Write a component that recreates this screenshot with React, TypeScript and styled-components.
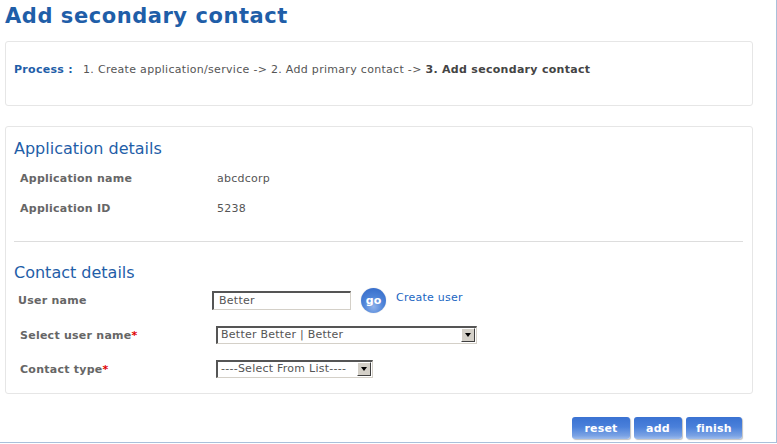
import React from "react";
import styled, { createGlobalStyle } from "styled-components";

const GlobalStyle = createGlobalStyle`
  html, body {
    margin: 0;
    padding: 0;
    background: #ffffff;
  }
  body {
    font-family: "DejaVu Sans", Verdana, sans-serif;
    font-size: 11px;
    color: #555555;
    letter-spacing: 0.25px;
  }
`;

// Layout
const Page = styled.div`
  box-sizing: border-box;
  width: 777px;
  height: 443px;
  border-right: 1px solid #a9c0da;
  border-bottom: 1px solid #a9c0da;
  padding: 3px 23px 0 5px;
  display: flex;
  flex-direction: column;
`;

const Title = styled.h1`
  margin: 0;
  font-size: 21px;
  line-height: 26px;
  font-weight: bold;
  color: #1f5ea8;
  letter-spacing: 0.55px;
`;

const Box = styled.section<{ $gap: number }>`
  box-sizing: border-box;
  margin-top: ${(p) => p.$gap}px;
  border: 1px solid #e6e6e6;
  border-radius: 3px;
`;

const ProcessBox = styled(Box)`
  height: 65px;
  padding: 21px 0 0 8px;
  font-size: 11px;
  line-height: 14px;
  letter-spacing: 0.3px;
`;

const ProcessLabel = styled.span`
  color: #1f5ea8;
  font-weight: bold;
  margin-right: 10px;
`;

const Steps = styled.span`
  color: #555555;
  b {
    color: #444444;
  }
`;

const DetailsBox = styled(Box)`
  height: 268px;
  padding: 12px 8px 0 8px;
`;

const Heading = styled.h2`
  margin: 0;
  font-size: 16px;
  line-height: 20px;
  font-weight: normal;
  color: #1f5ea8;
  letter-spacing: 0;
`;

const InfoTable = styled.div`
  display: grid;
  grid-template-columns: 197px 1fr;
  grid-auto-rows: 30px;
  padding: 4px 0 0 6px;
  align-items: center;
`;

const Label = styled.div`
  font-weight: bold;
  color: #666666;
  font-size: 11px;
`;

const Value = styled.div`
  color: #555555;
  font-size: 11px;
`;

const Divider = styled.hr`
  margin: 18px 1px 21px 0;
  border: none;
  border-top: 1px solid #dddddd;
`;

const FormRow = styled.div<{ $indent: number; $labelWidth: number; $height: number }>`
  display: flex;
  align-items: center;
  height: ${(p) => p.$height}px;
  padding-left: ${(p) => p.$indent}px;
  & > ${Label} {
    width: ${(p) => p.$labelWidth}px;
    flex: none;
  }
`;

const Required = styled.span`
  color: #e00000;
`;

const TextInput = styled.div`
  box-sizing: border-box;
  width: 139px;
  height: 19px;
  border-style: solid;
  border-width: 2px 1px 1px 2px;
  border-color: #555555 #d4d0c8 #d4d0c8 #555555;
  padding-left: 5px;
  line-height: 15px;
  color: #555555;
  font-size: 11px;
`;

const GoButton = styled.span`
  width: 25px;
  height: 25px;
  margin-left: 10px;
  border-radius: 50%;
  background: radial-gradient(circle at 50% 75%, #8fb2ea 0%, #4d83d8 45%, #2f66c6 100%);
  color: #ffffff;
  font-weight: bold;
  font-size: 11px;
  letter-spacing: 0;
  display: flex;
  align-items: center;
  justify-content: center;
  box-shadow: 0 0 1px rgba(0, 0, 0, 0.3);
`;

const Link = styled.a`
  margin-left: 10px;
  margin-top: -6px;
  color: #1a66c2;
  font-size: 11px;
  text-decoration: none;
`;

const Select = styled.div<{ $width: number }>`
  box-sizing: border-box;
  width: ${(p) => p.$width}px;
  height: 18px;
  border-style: solid;
  border-width: 2px 1px 1px 2px;
  border-color: #555555 #d4d0c8 #d4d0c8 #555555;
  display: flex;
  align-items: stretch;
  color: #555555;
  font-size: 11px;
`;

const SelectText = styled.span`
  flex: 1;
  padding-left: 3px;
  line-height: 14px;
  white-space: nowrap;
  overflow: hidden;
`;

const SelectArrow = styled.span`
  box-sizing: border-box;
  width: 14px;
  margin: 0 1px 1px 0;
  background: #d4d0c8;
  border-style: solid;
  border-width: 1px;
  border-color: #ffffff #404040 #404040 #ffffff;
  display: flex;
  align-items: center;
  justify-content: center;
  &::after {
    content: "";
    border-left: 3px solid transparent;
    border-right: 3px solid transparent;
    border-top: 4px solid #000000;
  }
`;

const Actions = styled.div`
  display: flex;
  justify-content: flex-end;
  gap: 4px;
  margin-top: 23px;
  padding-right: 11px;
`;

const ActionButton = styled.button<{ $width: number }>`
  width: ${(p) => p.$width}px;
  height: 22px;
  border: none;
  border-radius: 3px;
  background: linear-gradient(#3a72d2 0%, #4a80da 45%, #7aa2e4 85%, #9ebcec 100%);
  box-shadow: 1px 1px 1px rgba(120, 120, 120, 0.45);
  color: #ffffff;
  font-family: "DejaVu Sans", Verdana, sans-serif;
  font-weight: bold;
  font-size: 11px;
  letter-spacing: 0.2px;
  padding: 0;
`;

export default function App() {
  return (
    <>
      <GlobalStyle />
      <Page>
        <Title>Add secondary contact</Title>
        <ProcessBox $gap={12}>
          <ProcessLabel>Process :</ProcessLabel>
          <Steps>
            1. Create application/service -&gt; 2. Add primary contact -&gt;{" "}
            <b>3. Add secondary contact</b>
          </Steps>
        </ProcessBox>
        <DetailsBox $gap={20}>
          <Heading>Application details</Heading>
          <InfoTable>
            <Label>Application name</Label>
            <Value>abcdcorp</Value>
            <Label>Application ID</Label>
            <Value>5238</Value>
          </InfoTable>
          <Divider />
          <Heading>Contact details</Heading>
          <FormRow $indent={4} $labelWidth={194} $height={35}>
            <Label>User name</Label>
            <TextInput>Better</TextInput>
            <GoButton>go</GoButton>
            <Link href="#">Create user</Link>
          </FormRow>
          <FormRow $indent={6} $labelWidth={196} $height={34}>
            <Label>
              Select user name<Required>*</Required>
            </Label>
            <Select $width={261}>
              <SelectText>Better Better | Better</SelectText>
              <SelectArrow />
            </Select>
          </FormRow>
          <FormRow $indent={6} $labelWidth={196} $height={34}>
            <Label>
              Contact type<Required>*</Required>
            </Label>
            <Select $width={157}>
              <SelectText>----Select From List----</SelectText>
              <SelectArrow />
            </Select>
          </FormRow>
        </DetailsBox>
        <Actions>
          <ActionButton $width={58}>reset</ActionButton>
          <ActionButton $width={48}>add</ActionButton>
          <ActionButton $width={56}>finish</ActionButton>
        </Actions>
      </Page>
    </>
  );
}
